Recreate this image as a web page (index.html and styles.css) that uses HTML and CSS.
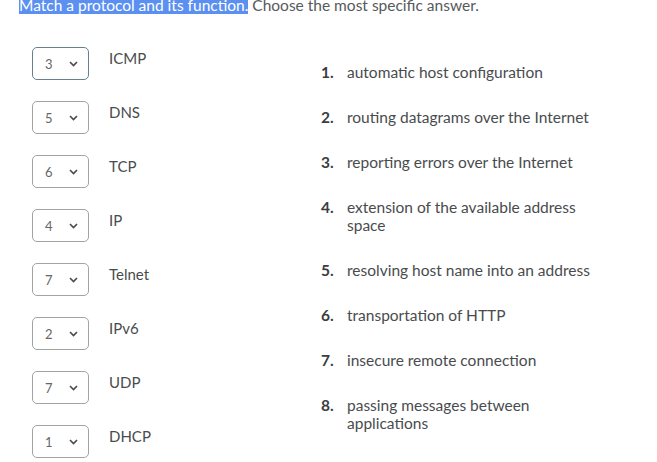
FILE: index.html
```html
<!DOCTYPE html>
<html lang="en">
<head>
  <meta charset="UTF-8">
  <title>Match a protocol</title>
  <link rel="stylesheet" href="styles.css">
</head>
<body>
  <!-- Question -->
  <p class="question"><span class="selected-text">Match a protocol and its function.</span> Choose the most specific answer.</p>

  <div class="matching">
    <!-- Left: dropdowns + protocols -->
    <div class="choices">
      <div class="choice">
        <div class="select focused"><span>3</span><svg width="9" height="6" viewBox="0 0 9 6"><polyline points="1,1 4.5,4.5 8,1"/></svg></div>
        <div class="label">ICMP</div>
      </div>
      <div class="choice">
        <div class="select"><span>5</span><svg width="9" height="6" viewBox="0 0 9 6"><polyline points="1,1 4.5,4.5 8,1"/></svg></div>
        <div class="label">DNS</div>
      </div>
      <div class="choice">
        <div class="select"><span>6</span><svg width="9" height="6" viewBox="0 0 9 6"><polyline points="1,1 4.5,4.5 8,1"/></svg></div>
        <div class="label">TCP</div>
      </div>
      <div class="choice">
        <div class="select"><span>4</span><svg width="9" height="6" viewBox="0 0 9 6"><polyline points="1,1 4.5,4.5 8,1"/></svg></div>
        <div class="label">IP</div>
      </div>
      <div class="choice">
        <div class="select"><span>7</span><svg width="9" height="6" viewBox="0 0 9 6"><polyline points="1,1 4.5,4.5 8,1"/></svg></div>
        <div class="label">Telnet</div>
      </div>
      <div class="choice">
        <div class="select"><span>2</span><svg width="9" height="6" viewBox="0 0 9 6"><polyline points="1,1 4.5,4.5 8,1"/></svg></div>
        <div class="label">IPv6</div>
      </div>
      <div class="choice">
        <div class="select"><span>7</span><svg width="9" height="6" viewBox="0 0 9 6"><polyline points="1,1 4.5,4.5 8,1"/></svg></div>
        <div class="label">UDP</div>
      </div>
      <div class="choice">
        <div class="select"><span>1</span><svg width="9" height="6" viewBox="0 0 9 6"><polyline points="1,1 4.5,4.5 8,1"/></svg></div>
        <div class="label">DHCP</div>
      </div>
    </div>

    <!-- Right: numbered functions -->
    <ol class="answers">
      <li><span class="num">1.</span><span class="text">automatic host configuration</span></li>
      <li><span class="num">2.</span><span class="text">routing datagrams over the Internet</span></li>
      <li><span class="num">3.</span><span class="text">reporting errors over the Internet</span></li>
      <li><span class="num">4.</span><span class="text">extension of the available address space</span></li>
      <li><span class="num">5.</span><span class="text">resolving host name into an address</span></li>
      <li><span class="num">6.</span><span class="text">transportation of HTTP</span></li>
      <li><span class="num">7.</span><span class="text">insecure remote connection</span></li>
      <li><span class="num">8.</span><span class="text">passing messages between applications</span></li>
    </ol>
  </div>
</body>
</html>
```

FILE: styles.css
```css
/* General */
body {
  margin: 0;
  font-family: Lato, "Open Sans", sans-serif;
  background: #ffffff;
  color: #494c4e;
  overflow: hidden;
}

/* Question line (scrolled partly out of view) */
.question {
  margin: -4px 0 0 19px;
  font-size: 15.5px;
  line-height: 19px;
  color: #565a5c;
}

.selected-text {
  background-color: #5b8ff0;
  color: #ffffff;
}

/* Two columns */
.matching {
  display: flex;
  padding: 32px 0 0 32px;
}

.choices {
  width: 289px;
  display: flex;
  flex-direction: column;
  gap: 21px;
}

.choice {
  display: flex;
  align-items: flex-start;
  gap: 20px;
}

.select {
  box-sizing: border-box;
  width: 57px;
  height: 33px;
  border: 1px solid #a3a3a3;
  border-radius: 5px;
  display: flex;
  align-items: center;
  padding-left: 12px;
  gap: 16px;
  font-size: 13px;
  color: #666;
}

.select.focused {
  border-color: #66808e;
}

.select svg polyline {
  fill: none;
  stroke: #4a4a4a;
  stroke-width: 1.6;
}

.label {
  font-size: 15px;
  line-height: 18px;
  padding-top: 2px;
}

/* Numbered answers */
.answers {
  list-style: none;
  margin: 0;
  padding: 16px 0 0 0;
  display: flex;
  flex-direction: column;
  gap: 27px;
}

.answers li {
  display: flex;
  font-size: 15.5px;
  line-height: 18px;
}

.answers .num {
  width: 26px;
  font-weight: bold;
  color: #3a3d3f;
}

.answers .text {
  width: 254px;
}
```
